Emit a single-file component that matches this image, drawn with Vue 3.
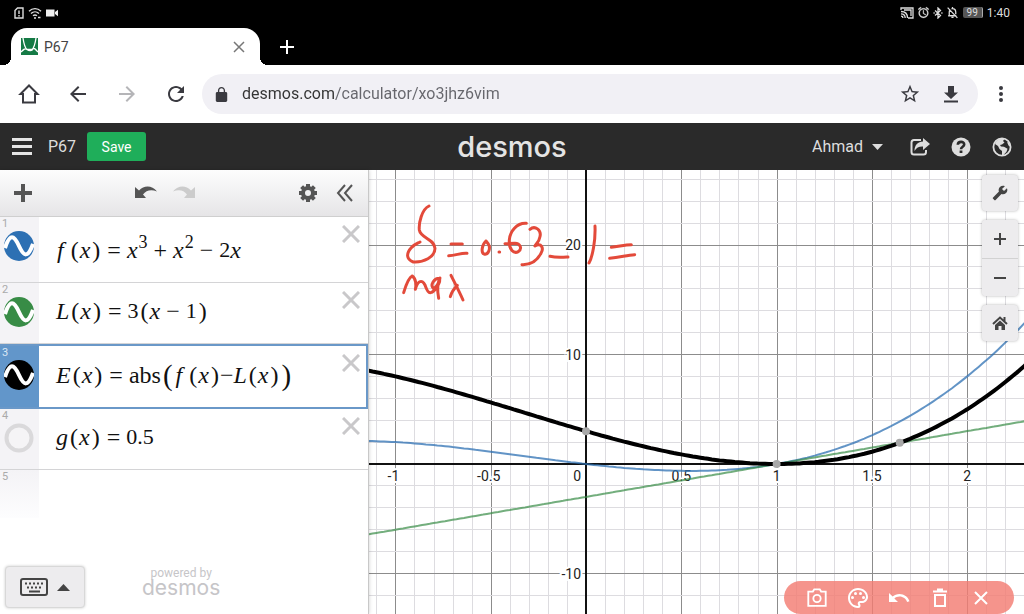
<script setup>
import { ref } from 'vue';

const url = ref('desmos.com/calculator/xo3jhz6vim');
const active = ref(3);

const v = (s) => ({ kind: 'var', s });
const n = (s) => ({ kind: 'num', s });
const op = (s) => ({ kind: 'op', s });
const par = (s) => ({ kind: 'par', s });
const call = (name) => [
  { kind: name === 'f' ? 'fn' : 'var', s: name },
  par('('),
  v('x'),
  par(')'),
];

const expressions = ref([
  {
    id: 1,
    color: '#2d70b3',
    tokens: [
      ...call('f'),
      op('='),
      v('x'),
      { kind: 'sup', s: '3' },
      op('+'),
      v('x'),
      { kind: 'sup', s: '2' },
      op('−'),
      n('2'),
      v('x'),
    ],
  },
  {
    id: 2,
    color: '#388c46',
    tokens: [...call('L'), op('='), n('3'), par('('), v('x'), op('−'), n('1'), par(')')],
  },
  {
    id: 3,
    color: '#000000',
    tokens: [
      ...call('E'),
      op('='),
      { kind: 'name', s: 'abs' },
      { kind: 'big', s: '(' },
      ...call('f'),
      { kind: 'tight', s: '−' },
      ...call('L'),
      { kind: 'big', s: ')' },
    ],
  },
  { id: 4, color: '', tokens: [...call('g'), op('='), n('0.5')] },
]);

function remove(id) {
  expressions.value = expressions.value.filter((e) => e.id !== id);
}

// graph scale, in pixels
const origin = { x: 217, y: 294 };
const unit = { x: 190.6, y: 10.95 };
const px = (x) => origin.x + x * unit.x;
const py = (y) => origin.y - y * unit.y;

const range = (from, to) => Array.from({ length: to - from + 1 }, (_, i) => from + i);
const columns = range(-12, 80).map((i) => ({ at: Math.round(px(i / 10)), major: i % 5 === 0 }));
const rows = range(-60, 14).map((i) => ({ at: Math.floor(py(i * 2)), major: i % 5 === 0 }));

const xLabels = [-1, -0.5, 0.5, 1, 1.5, 2];
const yLabels = [20, 10, -10];

const f = (x) => x ** 3 + x ** 2 - 2 * x;
const L = (x) => 3 * (x - 1);
const E = (x) => Math.abs(f(x) - L(x));

function plot(fn) {
  return range(-60, 220)
    .map((i) => `${px(i / 50).toFixed(1)},${py(fn(i / 50)).toFixed(1)}`)
    .join(' ');
}

const points = [0, 1, Math.sqrt(7) - 1].map((x) => ({ x: px(x), y: py(E(x)) }));

const ink = [
  'M177 108C155 118 146 160 148 180C152 205 192 205 195 235C195 262 160 278 130 276C108 268 108 250 125 232C135 222 143 220 150 216',
  'M243 222H277',
  'M236 257C255 257 275 248 291 250',
  'M348 213C335 225 333 248 342 252C355 256 363 235 355 222L348 213',
  'M387 246h2',
  'M469 160C440 158 420 185 418 210C416 240 432 252 445 245C458 235 450 220 435 220L405 221',
  'M480 178C495 165 515 180 510 200C508 215 498 222 495 228C515 217 522 235 513 250C500 275 480 285 456 284',
  'M540 259C560 264 580 262 594 261',
  'M675 168C677 210 668 260 657 279',
  'M724 232C745 230 765 224 784 224',
  'M719 265C750 262 770 256 794 254',
  'M101 368C108 345 118 322 127 318C137 325 140 345 136 358C142 335 155 325 165 345C170 360 175 370 182 368C195 365 214 335 208 325C192 325 180 345 190 355C198 352 206 340 210 324C200 345 202 365 206 385',
  'M243 316C255 340 268 365 279 390',
  'M262 346C250 358 244 368 241 380',
];
</script>

<template>
  <div class="screen">
    <div class="status">
      <div class="status-group">
        <svg width="10" height="12" viewBox="0 0 10 12" fill="none" stroke="#ddd"><path d="M1 3.5 3.5 1H9v10H1zM5 3.5v3.5M5 8v1.5" stroke-width="1.4" /></svg>
        <svg width="14" height="12" viewBox="0 0 14 12" fill="none" stroke="#ddd" stroke-width="1.4"><path d="M1 4.2C4.5 .8 9.5 .8 13 4.2M3 6.5C5.3 4.3 8.7 4.3 11 6.5M5 8.8C6.2 7.8 7.8 7.8 9 8.8M6 11h2M10 10.5h2.5" /></svg>
        <svg width="12" height="8" viewBox="0 0 12 8" fill="#eee"><path d="M0 .5h8.500v7H0zM9 3l3-2.2v6.400L9 5z" /></svg>
      </div>
      <div class="status-group right-group">
        <svg width="14" height="12" viewBox="0 0 14 12" fill="none" stroke="#ddd" stroke-width="1.3"><path d="M1 3V1h12v10H8M1 4.5C5 4.5 7.5 7 7.5 11M1 6.8C3.7 6.8 5.2 8.3 5.2 11M1 9.2C2.3 9.2 2.9 9.8 2.9 11M4 3h7v6" /></svg>
        <svg width="13" height="13" viewBox="0 0 24 24" fill="#ddd" stroke="#ddd" stroke-width=".5"><path d="M22 5.72l-4.6-3.86-1.29 1.53 4.6 3.86L22 5.72zM7.88 3.39L6.6 1.86 2 5.71l1.29 1.53 4.59-3.85zM12.5 8H11v6l4.75 2.85.75-1.23-4-2.37V8zM12 4c-4.97 0-9 4.03-9 9s4.02 9 9 9c4.97 0 9-4.03 9-9s-4.03-9-9-9zm0 16c-3.87 0-7-3.13-7-7s3.13-7 7-7 7 3.13 7 7-3.13 7-7 7z" /></svg>
        <svg width="10" height="12" viewBox="0 0 10 12" fill="none" stroke="#ddd" stroke-width="1.3"><path d="M2 3.500 7.500 8.500 5 11V1l2.500 2.500L2 8.500M.5 6h1.200M8.300 6h1.200" /></svg>
        <svg width="13" height="13" viewBox="0 0 24 24" fill="none" stroke="#ddd" stroke-width="2.4"><path d="M4 18h15M6 18V11c0-2 .8-3.500 2-4.500M10 5.500C14 4 18 6 18 11v4M12 5V2M10 21h4M3 3l18 19" /></svg>
        <span class="battery">99</span>
        <span>1:40</span>
      </div>
    </div>

    <div class="tabs">
      <div class="tab">
        <svg width="17" height="17" viewBox="0 0 17 17"><path fill="#157a45" d="M0 0h17v17H0z" /><path d="M2 0C3 7 4 10 6 11.500H11C13 10 14 7 15 0M0 14C3 11 4 10 6 11.500S11 13 12 11 15 12 17 14" fill="none" stroke="#fff" stroke-width="1.3" /></svg>
        <span class="tab-title">P67</span>
        <button class="bare" aria-label="Close tab">
          <svg width="12" height="12" viewBox="0 0 12 12" stroke="#777" stroke-width="1.5"><path d="M1 1l10 10M11 1 1 11" /></svg>
        </button>
      </div>
      <button class="bare" aria-label="New tab">
        <svg width="14" height="14" viewBox="0 0 14 14" stroke="#fff" stroke-width="2"><path d="M7 0v14M0 7h14" /></svg>
      </button>
    </div>

    <div class="browser">
      <button class="nav" aria-label="Home">
        <svg width="24" height="24" viewBox="0 0 24 24" fill="none" stroke="#3a3a40" stroke-width="2"><path d="M6 20.500V12H3.500L12 3.500 20.500 12H18v8.500z" /></svg>
      </button>
      <button class="nav" aria-label="Back">
        <svg width="24" height="24" viewBox="0 0 24 24" fill="#3a3a40"><path d="M20 11H7.830l5.590-5.590L12 4l-8 8 8 8 1.410-1.410L7.830 13H20v-2z" /></svg>
      </button>
      <button class="nav" aria-label="Forward">
        <svg width="24" height="24" viewBox="0 0 24 24" fill="#b5b5b8"><path d="M12 4l-1.410 1.410L16.170 11H4v2h12.170l-5.580 5.590L12 20l8-8z" /></svg>
      </button>
      <button class="nav" aria-label="Reload">
        <svg width="24" height="24" viewBox="0 0 24 24" fill="#3a3a40"><path d="M17.650 6.350C16.200 4.900 14.210 4 12 4c-4.420 0-7.990 3.580-7.990 8s3.570 8 7.990 8c3.730 0 6.840-2.550 7.730-6h-2.080c-.82 2.330-3.040 4-5.650 4-3.310 0-6-2.690-6-6s2.690-6 6-6c1.660 0 3.140.69 4.220 1.780L13 11h7V4l-2.350 2.350z" /></svg>
      </button>
      <div class="address">
        <svg width="15" height="15" viewBox="3 1 18 21" fill="#3a3a40"><path d="M18 8h-1V6c0-2.760-2.240-5-5-5S7 3.240 7 6v2H6c-1.100 0-2 .9-2 2v10c0 1.100.9 2 2 2h12c1.100 0 2-.9 2-2V10c0-1.100-.9-2-2-2zM8.900 6c0-1.710 1.390-3.100 3.100-3.100s3.100 1.390 3.100 3.100v2H8.900V6z" /></svg>
        <input v-model="url" class="url" type="text" aria-label="Address" />
        <button class="bare" aria-label="Bookmark">
          <svg width="22" height="22" viewBox="0 0 24 24" fill="#3a3a40"><path d="M22 9.240l-7.190-.62L12 2 9.190 8.630 2 9.240l5.460 4.730L5.820 21 12 17.270 18.180 21l-1.630-7.030L22 9.240zM12 15.400l-3.760 2.270 1-4.280-3.320-2.880 4.380-.38L12 6.100l1.710 4.040 4.380.38-3.320 2.880 1 4.280L12 15.400z" /></svg>
        </button>
        <button class="bare" aria-label="Download">
          <svg width="24" height="24" viewBox="0 0 24 24" fill="#3a3a40"><path d="M19 10.500h-4V4H9v6.500H5l7 6.500 7-6.500zM5 18.500v2h14v-2H5z" /></svg>
        </button>
      </div>
      <button class="nav more" aria-label="More">
        <svg width="6" height="18" viewBox="0 0 6 18" fill="#3a3a40"><circle cx="3" cy="3" r="2" /><circle cx="3" cy="9" r="2" /><circle cx="3" cy="15" r="2" /></svg>
      </button>
    </div>

    <header class="header">
      <div class="header-side">
        <button class="bare" aria-label="Menu">
          <svg width="20" height="17" viewBox="0 0 20 17" fill="#e4e4e4"><path d="M0 0h20v3H0zM0 7h20v3H0zM0 14h20v3H0z" /></svg>
        </button>
        <span class="graph-title">P67</span>
        <button class="save">Save</button>
      </div>
      <div class="logo">desmos</div>
      <div class="header-side right">
        <button class="bare account">
          Ahmad
          <svg width="11" height="6" viewBox="0 0 11 6" fill="#ddd"><path d="M0 0h11L5.500 6z" /></svg>
        </button>
        <button class="bare" aria-label="Share">
          <svg width="20" height="18" viewBox="0 0 20 18"><path d="M11 2H4Q1.500 2 1.500 4.500V14Q1.500 16.500 4 16.500H13.500Q16 16.500 16 14V12" fill="none" stroke="#ddd" stroke-width="2" /><path d="M13 0l7 6-7 6V8.500C9 8.300 6.500 9.500 4.500 13 4.500 7 8 3.500 13 3.500z" fill="#ddd" /></svg>
        </button>
        <button class="bare" aria-label="Help">
          <svg width="20" height="20" viewBox="2 2 20 20"><circle cx="12" cy="12" r="9.500" fill="#ddd" /><path d="M8.800 9.700C9 6 15.200 6 15.200 9.600c0 2.200-3.200 2.200-3.200 4.600" fill="none" stroke="#2a2a2a" stroke-width="2.6" /><path d="M10.600 15.500h2.800V18h-2.800z" fill="#2a2a2a" /></svg>
        </button>
        <button class="bare" aria-label="Language">
          <svg width="20" height="20" viewBox="0 0 20 20"><circle cx="10" cy="10" r="8.600" fill="none" stroke="#ddd" stroke-width="1.8" /><path d="M4 4.500 8 1.500 12.500 2 11 4l1.500 1.500L10 7.500 8 8l1 1.500 3 .2 3.500 2-1 3L11.500 18l-1.500.5V14L7.500 12 6 9 3 7zM15 5l2.500 1 1 4-2-1.500z" fill="#ddd" /></svg>
        </button>
      </div>
    </header>

    <main class="main">
      <section class="panel">
        <div class="toolbar">
          <button class="bare" aria-label="Add item">
            <svg width="18" height="18" viewBox="0 0 18 18" stroke="#555" stroke-width="4"><path d="M9 0v18M0 9h18" /></svg>
          </button>
          <div class="history">
            <button class="bare" aria-label="Undo">
              <svg width="22" height="14" viewBox="0 0 22 14" fill="#555"><path d="M0 1v11h11L8 8.500C11 4.500 16 3 22 5.500 17-1 9-1 4 4.500z" /></svg>
            </button>
            <button class="bare" aria-label="Redo">
              <svg width="22" height="14" viewBox="0 0 22 14" fill="#ccc"><path d="M22 1v11H11l3-3.500C11 4.500 6 3 0 5.500 5-1 13-1 18 4.500z" /></svg>
            </button>
          </div>
          <button class="bare" aria-label="Settings">
            <svg width="18" height="18" viewBox="-9 -9 18 18" stroke="#555" fill="none">
              <circle r="5" stroke-width="4" />
              <path v-for="a in [0, 45, 90, 135]" :key="a" d="M0-9v3M0 6v3" :transform="`rotate(${a})`" stroke-width="4" />
            </svg>
          </button>
          <button class="bare" aria-label="Hide list">
            <svg width="18" height="18" viewBox="0 0 18 18" fill="none" stroke="#555" stroke-width="2"><path d="M9 1 2 9l7 8M16 1 9 9l7 8" /></svg>
          </button>
        </div>

        <div
          v-for="e in expressions"
          :key="e.id"
          class="row"
          :class="{ active: e.id === active, tall: e.id === 1 }"
          @click="active = e.id"
        >
          <div class="gutter">
            <span class="index">{{ e.id }}</span>
            <svg v-if="e.color" width="30" height="30" viewBox="0 0 30 30">
              <circle cx="15" cy="15" r="15" :fill="e.color" />
              <path d="M1 17C6 2 10 4 15 15S24 27 29 13" fill="none" stroke="#fff" stroke-width="4" />
            </svg>
            <svg v-else width="30" height="30" viewBox="0 0 30 30"><circle cx="15" cy="15" r="12.500" fill="#f5f4f6" stroke="#dad9db" stroke-width="4" /></svg>
          </div>
          <div class="math">
            <span v-for="(t, i) in e.tokens" :key="i" :class="t.kind">{{ t.s }}</span>
          </div>
          <button class="bare remove" aria-label="Delete" @click.stop="remove(e.id)">
            <svg width="18" height="18" viewBox="0 0 18 18" stroke="#c9c8ca" stroke-width="3"><path d="M1 1l16 16M17 1 1 17" /></svg>
          </button>
        </div>
        <div class="row last">
          <div class="gutter"><span class="index">5</span></div>
        </div>

        <div class="panel-foot">
          <button class="keypad" aria-label="Show keypad">
            <svg width="28" height="18" viewBox="0 0 28 18"><rect x="1" y="1" width="26" height="16" rx="2" fill="none" stroke="#444" stroke-width="2" /><path d="M5 5.500h19M7 9.500h15" stroke="#444" stroke-width="2" stroke-dasharray="2 2" /><path d="M9 13.500h11" stroke="#444" stroke-width="2" /></svg>
            <svg width="13" height="7" viewBox="0 0 13 7" fill="#444"><path d="M0 7h13L6.500 0z" /></svg>
          </button>
          <div class="powered">
            <span>powered by</span>
            <span class="powered-logo">desmos</span>
          </div>
        </div>
      </section>

      <section class="graph">
        <svg class="plot" width="100%" height="100%">
          <g stroke-width="1" shape-rendering="crispEdges">
            <line v-for="c in columns" :key="'c' + c.at" :x1="c.at" :x2="c.at" y1="0" y2="100%" :class="c.major ? 'major' : 'minor'" />
            <line v-for="r in rows" :key="'r' + r.at" :y1="r.at" :y2="r.at" x1="0" x2="100%" :class="r.major ? 'major' : 'minor'" />
          </g>
          <g stroke="#111" stroke-width="2">
            <line :x1="origin.x" :x2="origin.x" y1="0" y2="100%" />
            <line :y1="origin.y" :y2="origin.y" x1="0" x2="100%" />
          </g>
          <g class="label">
            <text v-for="x in xLabels" :key="x" :x="px(x) - (x < 0 ? 2 : 0)" :y="origin.y + 17" text-anchor="middle">{{ x }}</text>
            <text :x="origin.x - 5" :y="origin.y + 17" text-anchor="end">0</text>
            <text v-for="y in yLabels" :key="y" :x="origin.x - 5" :y="py(y) + 5" text-anchor="end">{{ y }}</text>
          </g>
          <g fill="none">
            <polyline :points="plot(f)" stroke="#2d70b3" stroke-opacity="0.75" stroke-width="2" />
            <polyline :points="plot(L)" stroke="#388c46" stroke-opacity="0.7" stroke-width="2" />
            <polyline :points="plot(E)" stroke="#000" stroke-width="4" />
          </g>
          <circle v-for="p in points" :key="p.x" :cx="p.x" :cy="p.y" r="4" fill="#a8a8a8" />
          <g transform="translate(1 0) scale(0.3333)" fill="none" stroke="#e34a3a" stroke-width="9" stroke-linecap="round" stroke-linejoin="round">
            <path v-for="d in ink" :key="d" :d="d" />
          </g>
        </svg>

        <div class="controls">
          <button class="control" aria-label="Graph settings">
            <svg width="16" height="16" viewBox="0 0 24 24" fill="#444"><path transform="translate(24 0) scale(-1 1)" d="M22.700 19l-9.100-9.100c.9-2.300.4-5-1.500-6.900-2-2-5-2.400-7.400-1.300L9 6 6 9 1.600 4.700C.4 7.100.9 10.100 2.900 12.100c1.900 1.900 4.600 2.400 6.900 1.500l9.100 9.100c.4.4 1 .4 1.400 0l2.300-2.300c.5-.4.5-1.100.1-1.400z" /></svg>
          </button>
          <div class="zoom">
            <button class="control" aria-label="Zoom in">
              <svg width="12" height="12" viewBox="0 0 12 12" stroke="#444" stroke-width="2"><path d="M6 0v12M0 6h12" /></svg>
            </button>
            <button class="control" aria-label="Zoom out">
              <svg width="12" height="12" viewBox="0 0 12 12" stroke="#444" stroke-width="2"><path d="M0 6h12" /></svg>
            </button>
          </div>
          <button class="control" aria-label="Default view">
            <svg width="16" height="14" viewBox="0 0 16 14"><path d="M1 8 8 1.500 15 8M12.500 1v4" fill="none" stroke="#444" stroke-width="2" /><path d="M8 4.500 13 9v5H9.500v-4h-3v4H3V9z" fill="#444" /></svg>
          </button>
        </div>

        <div class="pen-bar">
          <button class="bare" aria-label="Screenshot">
            <svg width="22" height="22" viewBox="0 0 24 24" fill="none" stroke="#fff" stroke-width="2"><path d="M2.500 5h5L9 2.500h6L16.500 5h5v15.500h-19z" /><circle cx="12" cy="12.500" r="4" /></svg>
          </button>
          <button class="bare" aria-label="Colour">
            <svg width="22" height="22" viewBox="1 1 22 22" fill="#fff"><path d="M12 22C6.490 22 2 17.510 2 12S6.490 2 12 2s10 4.040 10 9c0 3.310-2.690 6-6 6h-1.770c-.28 0-.5.22-.5.5 0 .12.05.23.13.33.41.47.64 1.060.64 1.670A2.500 2.500 0 0 1 12 22zm0-18c-4.410 0-8 3.590-8 8s3.590 8 8 8c.28 0 .5-.22.5-.5a.54.54 0 0 0-.14-.35c-.41-.46-.63-1.050-.63-1.650a2.500 2.500 0 0 1 2.500-2.500H16c2.210 0 4-1.790 4-4 0-3.860-3.590-7-8-7z" /><circle cx="6.500" cy="11.500" r="1.500" /><circle cx="9.500" cy="7.500" r="1.500" /><circle cx="14.500" cy="7.500" r="1.500" /><circle cx="17.500" cy="11.500" r="1.500" /></svg>
          </button>
          <button class="bare" aria-label="Undo stroke">
            <svg width="22" height="22" viewBox="1 1 22 22" fill="#fff"><path d="M12.500 8c-2.650 0-5.050.99-6.900 2.600L2 7v9h9l-3.620-3.620c1.390-1.160 3.160-1.880 5.120-1.880 3.540 0 6.550 2.310 7.600 5.500l2.370-.78C21.080 11.030 17.150 8 12.500 8z" /></svg>
          </button>
          <button class="bare" aria-label="Clear">
            <svg width="22" height="22" viewBox="0 0 22 22" fill="none" stroke="#fff" stroke-width="2"><path d="M4 4.500h14M8 2.500h6M6 8h10v11H6z" /></svg>
          </button>
          <button class="bare" aria-label="Close drawing">
            <svg width="22" height="22" viewBox="0 0 22 22" stroke="#fff" stroke-width="2"><path d="M5 5l12 12M17 5 5 17" /></svg>
          </button>
        </div>
      </section>
    </main>
  </div>
</template>

<style>
body {
  margin: 0;
}
</style>

<style scoped>
.screen {
  display: flex;
  flex-direction: column;
  height: 100vh;
  overflow: hidden;
  background: #000;
  font-family: Roboto, sans-serif;
}

svg {
  display: block;
  flex: none;
}

button {
  font-family: inherit;
  cursor: pointer;
}

.bare {
  display: flex;
  align-items: center;
  padding: 0;
  border: 0;
  background: none;
  color: inherit;
}

.status {
  display: flex;
  justify-content: space-between;
  height: 28px;
  padding: 0 14px;
  color: #ddd;
  font-size: 12px;
}

.status-group {
  display: flex;
  align-items: center;
  gap: 4px;
  height: 25px;
}

.right-group {
  gap: 3px;
}

.battery {
  padding: 0 4px;
  margin: 0 1px;
  border-right: 1px solid #aaa;
  border-radius: 2px;
  background: #555;
  font-size: 10px;
  line-height: 11px;
}

.tabs {
  display: flex;
  align-items: center;
  gap: 20px;
  height: 37px;
  padding-left: 11px;
}

.tab {
  position: relative;
  display: flex;
  align-items: center;
  gap: 6px;
  box-sizing: border-box;
  width: 249px;
  height: 37px;
  padding: 0 15px 0 10px;
  border-radius: 16px 16px 0 0;
  background: #fff;
}

.tab::before,
.tab::after {
  content: '';
  position: absolute;
  bottom: 0;
  width: 8px;
  height: 8px;
}

.tab::before {
  right: 100%;
  background: radial-gradient(circle at 0 0, transparent 8px, #fff 8px);
}

.tab::after {
  left: 100%;
  background: radial-gradient(circle at 100% 0, transparent 8px, #fff 8px);
}

.tab-title {
  flex: 1;
  color: #444;
  font-size: 14px;
}

.browser {
  display: flex;
  align-items: center;
  height: 58px;
  padding-left: 4px;
  background: #fff;
}

.nav {
  display: flex;
  align-items: center;
  justify-content: center;
  width: 49px;
  height: 40px;
  padding: 0;
  border: 0;
  background: none;
}

.more {
  width: 46px;
}

.address {
  display: flex;
  flex: 1;
  align-items: center;
  gap: 18px;
  height: 40px;
  margin-left: 2px;
  padding: 0 15px 0 12px;
  border-radius: 20px;
  background: #f1f0f5;
}

.url {
  flex: 1;
  min-width: 0;
  margin-left: -5px;
  padding: 0;
  border: 0;
  outline: 0;
  background: linear-gradient(90deg, #333 92px, #66666c 92px) text;
  color: transparent;
  caret-color: #333;
  font-family: inherit;
  font-size: 16px;
  line-height: 20px;
}

.header {
  display: flex;
  align-items: center;
  height: 47px;
  padding: 0 12px;
  background: #2a2a2a;
  color: #ddd;
}

.header-side {
  display: flex;
  flex: 1;
  align-items: center;
}

.graph-title {
  margin: 0 11px 0 16px;
  font-size: 16px;
}

.save {
  width: 59px;
  height: 29px;
  padding: 0;
  border: 0;
  border-radius: 3px;
  background: #1fae5a;
  color: #fff;
  font-size: 14px;
}

.logo {
  color: #e4e4e4;
  font-family: Inter, sans-serif;
  font-size: 29px;
  font-weight: 500;
  line-height: 40px;
}

.right {
  justify-content: flex-end;
  gap: 21px;
}

.account {
  gap: 9px;
  margin-right: 6px;
  font-size: 16px;
}

.main {
  display: flex;
  flex: 1;
  min-height: 0;
  background: #fff;
}

.panel {
  z-index: 1;
  display: flex;
  flex: 0 0 36%;
  flex-direction: column;
  box-sizing: border-box;
  border-right: 1px solid #c8c8c8;
  box-shadow: 0 0 4px rgba(0, 0, 0, 0.2);
  background: #fff;
}

.toolbar {
  display: flex;
  align-items: center;
  gap: 19px;
  box-sizing: border-box;
  height: 47px;
  padding: 0 14px;
  border-bottom: 1px solid #cfcfcf;
  background: linear-gradient(#fdfdfd, #e6e5e7);
}

.history {
  display: flex;
  flex: 1;
  justify-content: center;
  gap: 16px;
}

.row {
  display: flex;
  box-sizing: border-box;
  height: 61px;
  border-bottom: 1px solid #d4d4d6;
}

.row.tall {
  height: 66px;
}

.row.active {
  height: 65px;
  border: 2px solid #6a98c8;
  border-left: 0;
}

.gutter {
  display: flex;
  flex: 0 0 39px;
  flex-direction: column;
  align-items: center;
  box-sizing: border-box;
  padding-right: 2px;
  background: #f4f3f6;
}

.active .gutter {
  background: #6296ca;
}

.index {
  align-self: flex-start;
  padding-left: 2px;
  color: #aaa;
  font-size: 11px;
  line-height: 14px;
}

.active .index {
  color: #dbe8f5;
}

.last {
  height: 48px;
  border: 0;
}

.last .gutter {
  background: linear-gradient(#f4f3f6, #fdfdfe);
}

.math {
  display: flex;
  flex: 1;
  align-items: center;
  padding: 0 0 4px 17px;
  color: #111;
  font-family: 'Liberation Serif', serif;
  font-size: 24px;
  line-height: 32px;
}

.tall .math {
  padding-bottom: 0;
}

.var,
.fn {
  font-style: italic;
}

.fn {
  padding: 0 5px 0 1px;
}

.num {
  font-size: 22px;
}

.par {
  padding: 0 1px 0 2px;
}

.big {
  padding: 0 2px;
  font-size: 29px;
}

.op {
  padding: 0 6px;
}

.sup {
  padding-left: 1px;
  padding-bottom: 16px;
  font-size: 18px;
  line-height: 16px;
}

.remove {
  align-self: flex-start;
  padding: 8px 8px 0 0;
}

.active .remove {
  padding-right: 6px;
}

.panel-foot {
  display: flex;
  align-items: center;
  gap: 57px;
  margin-top: auto;
  padding: 0 5px 6px;
}

.keypad {
  display: flex;
  align-items: center;
  justify-content: center;
  gap: 9px;
  width: 80px;
  height: 42px;
  padding: 0;
  border: 1px solid #d8d8d8;
  border-radius: 4px;
  box-shadow: 0 0 3px rgba(0, 0, 0, 0.2);
  background: #edecee;
}

.powered {
  display: flex;
  flex-direction: column;
  align-items: center;
  align-self: flex-start;
  color: #c6c5c8;
  font-size: 12px;
  line-height: 14px;
}

.powered-logo {
  font-family: Inter, sans-serif;
  font-size: 21px;
  line-height: 16px;
}

.graph {
  position: relative;
  flex: 1;
  min-width: 0;
}

.plot {
  position: absolute;
  inset: 0;
}

.minor {
  stroke: #dddce0;
}

.major {
  stroke: #8c8c8c;
}

.label {
  fill: #222;
  stroke: #fff;
  stroke-width: 4px;
  paint-order: stroke;
  font-size: 14px;
}

.controls {
  position: absolute;
  top: 5px;
  right: 6px;
  display: flex;
  flex-direction: column;
  gap: 9px;
}

.control,
.zoom {
  border-radius: 4px;
  background: #edecee;
  box-shadow: 0 0 3px rgba(0, 0, 0, 0.3);
}

.control {
  display: flex;
  align-items: center;
  justify-content: center;
  width: 36px;
  height: 36px;
  padding: 0;
  border: 0;
}

.zoom .control {
  height: 38px;
  box-shadow: none;
}

.zoom .control + .control {
  border-top: 1px solid #d2d2d2;
  border-radius: 0 0 4px 4px;
}

.pen-bar {
  position: absolute;
  right: 10px;
  bottom: 0;
  display: flex;
  gap: 19px;
  padding: 6px 22px 5px;
  border-radius: 17px;
  background: rgba(243, 125, 115, 0.82);
}
</style>
